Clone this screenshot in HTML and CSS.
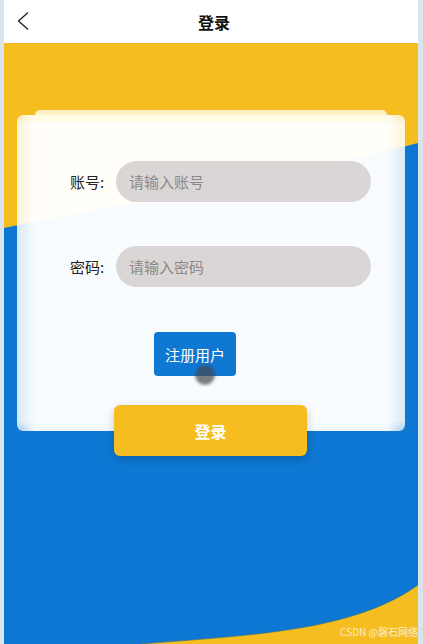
FILE: index.html
```html
<!DOCTYPE html>
<html lang="zh">
<head>
<meta charset="utf-8">
<title>登录</title>
<link rel="stylesheet" href="styles.css">
</head>
<body>
<div class="phone">
  <header class="topbar">
    <svg class="back" width="12" height="18" viewBox="0 0 12 18"><polyline points="10.5,1 1.5,9 10.5,17" fill="none" stroke="#222" stroke-width="1.4" stroke-linecap="round" stroke-linejoin="round"/></svg>
    <h1 class="title">登录</h1>
  </header>
  <main class="main">
    <svg class="bg" width="414" height="601" viewBox="0 0 414 601" preserveAspectRatio="none">
      <path d="M0 185 C 120 160, 260 140, 414 100 L414 601 L0 601 Z" fill="#0e77d3"/>
      <path d="M136 601 C 250 592, 350 588, 414 542 L414 601 Z" fill="#f5bd1f"/>
      <path d="M136 601 C 250 592, 350 588, 414 542" fill="none" stroke="#3b6f6a" stroke-width="1" opacity="0.6"/>
    </svg>
    <section class="card">
      <div class="row">
        <label class="label">账号:</label>
        <div class="input">请输入账号</div>
      </div>
      <div class="row">
        <label class="label">密码:</label>
        <div class="input">请输入密码</div>
      </div>
      <div class="reg-wrap">
        <button class="reg">注册用户</button>
        <span class="touch"></span>
      </div>
      <button class="login">登录</button>
    </section>
    <span class="mark">CSDN @磐石网络</span>
  </main>
</div>
</body>
</html>
```
FILE: styles.css
```css
* { box-sizing: border-box; }
html, body { margin: 0; padding: 0; }
body {
  background: #d9e4ec;
  font-family: "Noto Sans CJK SC", "Noto Sans", sans-serif;
  width: 423px;
  height: 644px;
  overflow: hidden;
}
.phone {
  margin: 0 5px 0 4px;
  width: 414px;
  height: 644px;
  display: flex;
  flex-direction: column;
  overflow: hidden;
}
.topbar {
  height: 43px;
  flex: none;
  background: #fff;
  display: flex;
  align-items: center;
  justify-content: center;
  position: relative;
}
.back {
  position: absolute;
  left: 13px;
  top: 12px;
}
.title {
  margin: 0;
  font-size: 16px;
  font-weight: 700;
  color: #111;
  line-height: 1;
  transform: translateX(3px);
}
.main {
  flex: 1;
  background: #f5bd1f;
  position: relative;
  padding: 72px 13px 0 13px;
}
.bg {
  position: absolute;
  left: 0;
  top: 0;
}
.card {
  position: relative;
  height: 316px;
  border-radius: 6px;
  background:
    linear-gradient(to bottom, rgba(255,255,255,0) 0, rgba(255,255,255,0.6) 10px, rgba(255,255,255,0.6) calc(100% - 10px), rgba(255,255,255,0) 100%),
    linear-gradient(to right, rgba(255,255,255,0) 0, rgba(255,255,255,0.85) 18px, rgba(255,255,255,0.85) calc(100% - 18px), rgba(255,255,255,0) 100%),
    rgba(255,255,255,0.6);
  padding: 46px 0 0 0;
  display: flex;
  flex-direction: column;
  align-items: flex-start;
}
.card > * { flex: none; }
.card::before {
  content: "";
  position: absolute;
  left: 18px;
  right: 18px;
  top: -5px;
  height: 12px;
  border-radius: 5px 5px 0 0;
  background: rgba(255,250,225,0.85);
}
.row {
  display: flex;
  align-items: center;
  padding-left: 53px;
  margin-bottom: 44px;
}
.label {
  width: 46px;
  font-size: 15px;
  color: #222;
}
.input {
  width: 255px;
  height: 41px;
  border-radius: 21px;
  background: #dbd6d6;
  color: #8c8888;
  font-size: 15px;
  display: flex;
  align-items: center;
  padding-left: 13px;
}
.reg-wrap {
  position: relative;
  margin-left: 137px;
  margin-top: 1px;
}
.reg {
  width: 82px;
  height: 44px;
  border: none;
  border-radius: 4px;
  background: #0f78d2;
  color: #fff;
  font-family: inherit;
  font-size: 15px;
  padding: 0;
  display: block;
}
.touch {
  position: absolute;
  left: 41px;
  top: 33px;
  width: 20px;
  height: 20px;
  border-radius: 50%;
  background: rgba(70,70,80,0.7);
  filter: blur(1.5px);
}
.login {
  margin-top: 29px;
  margin-left: 97px;
  width: 193px;
  height: 51px;
  border: none;
  border-radius: 6px;
  background: #f5bd1f;
  color: #fff;
  font-family: inherit;
  font-size: 16px;
  font-weight: 700;
  box-shadow: 0 3px 8px rgba(0,0,0,0.2);
  padding: 0;
}
.mark {
  position: absolute;
  right: 0;
  bottom: 5px;
  font-size: 10px;
  color: rgba(255,255,255,0.75);
  font-family: "Noto Sans CJK SC", sans-serif;
}
```
